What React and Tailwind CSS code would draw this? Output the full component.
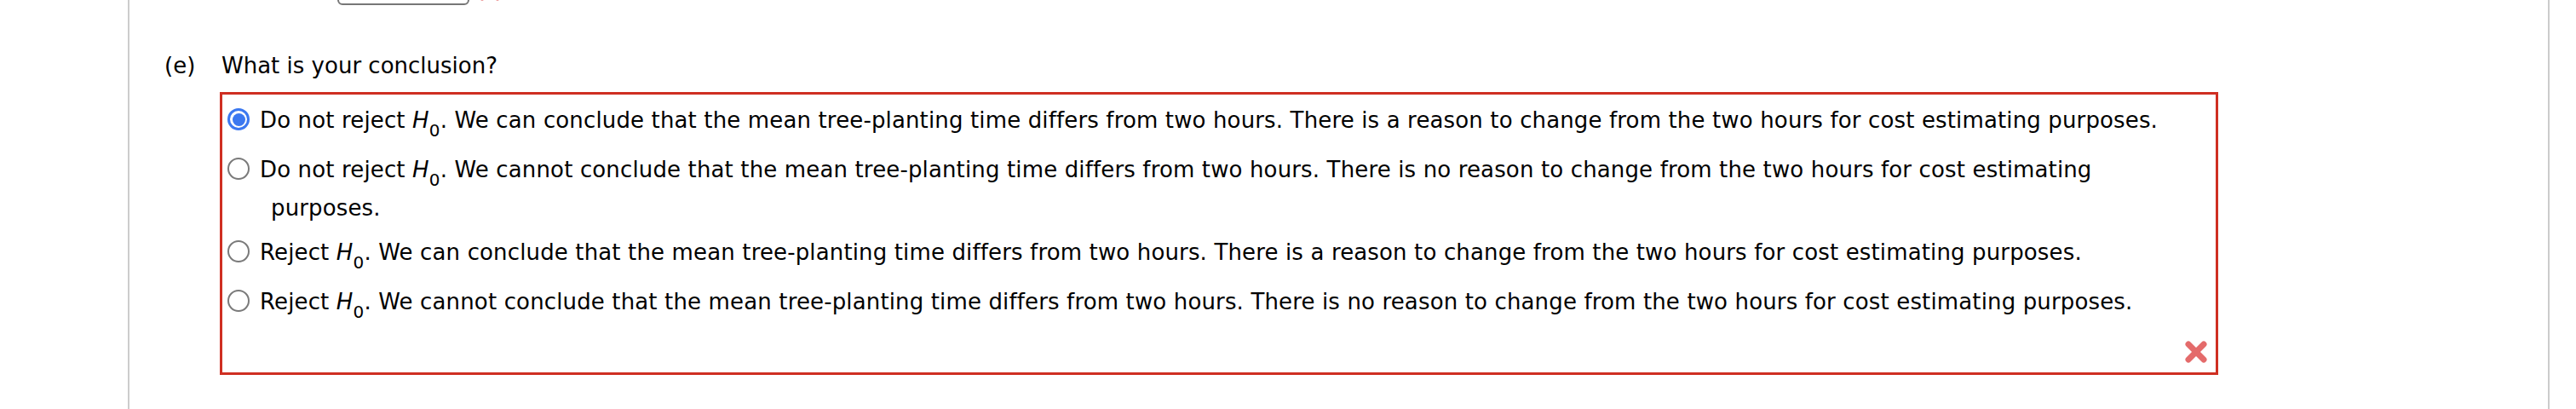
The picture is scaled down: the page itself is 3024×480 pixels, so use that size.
import React from "react";

const options = [
  {
    checked: true,
    lead: "Do not reject",
    rest: ". We can conclude that the mean tree-planting time differs from two hours. There is a reason to change from the two hours for cost estimating purposes.",
  },
  {
    checked: false,
    lead: "Do not reject",
    rest: ". We cannot conclude that the mean tree-planting time differs from two hours. There is no reason to change from the two hours for cost estimating",
    more: "purposes.",
  },
  {
    checked: false,
    lead: "Reject",
    rest: ". We can conclude that the mean tree-planting time differs from two hours. There is a reason to change from the two hours for cost estimating purposes.",
  },
  {
    checked: false,
    lead: "Reject",
    rest: ". We cannot conclude that the mean tree-planting time differs from two hours. There is no reason to change from the two hours for cost estimating purposes.",
  },
];

const WrongMark = ({ className }) => (
  <svg viewBox="0 0 28 28" className={className}>
    <g stroke="#e25b5b" strokeWidth="7" strokeLinecap="round" opacity="0.9">
      <line x1="5" y1="5" x2="23" y2="23" />
      <line x1="23" y1="5" x2="5" y2="23" />
    </g>
  </svg>
);

const Radio = ({ checked }) =>
  checked ? (
    <div className="w-[26px] h-[26px] shrink-0 mt-[5px] rounded-full border-[3px] border-[#3b78f0] bg-white flex items-center justify-center">
      <div className="w-[15px] h-[15px] rounded-full bg-[#3b78f0]" />
    </div>
  ) : (
    <div className="w-[26px] h-[26px] shrink-0 mt-[5px] rounded-full border-2 border-[#7a7a7a] bg-white" />
  );

const Option = ({ checked, lead, rest, more }) => (
  <div className="flex items-start">
    <Radio checked={checked} />
    <div className="ml-[12px] flex flex-col tracking-[0.14px] whitespace-nowrap">
      <div className="leading-[39px] pb-[6px]">
        {lead} <i>H</i>
        <span className="text-[20px] leading-none relative top-[10px]">0</span>
        {rest}
      </div>
      {more && <div className="leading-[39px] pl-[13px]">{more}</div>}
    </div>
  </div>
);

export default function App() {
  return (
    <div className="w-[3024px] h-[480px] bg-white overflow-hidden flex font-['DejaVu_Sans',sans-serif] text-[26px] text-black">
      <div className="w-[150px] shrink-0" />
      <div className="w-[2843px] shrink-0 border-l-2 border-r-2 border-[#cccccc] flex flex-col">
        <div className="h-[6px] flex items-end pl-[244px]">
          <div className="w-[155px] h-[40px] shrink-0 border-2 border-[#777] rounded-[6px]" />
          <WrongMark className="w-[28px] h-[28px] ml-[10px] mb-[4px] shrink-0" />
        </div>
        <div className="flex pl-[41px] mt-[52px]">
          <div className="w-[67px] shrink-0 leading-[39px]">(e)</div>
          <div className="flex flex-col">
            <div className="leading-[39px]">What is your conclusion?</div>
            <div className="mt-[11px] -ml-[2px] w-[2346px] border-[3px] border-[#cf2f22] pl-[6px] pt-[11px] pr-[9px] pb-[10px] flex flex-col">
              <div className="flex flex-col gap-[13px]">
                {options.map((o, i) => (
                  <Option key={i} {...o} />
                ))}
              </div>
              <div className="flex justify-end mt-[19px]">
                <WrongMark className="w-[28px] h-[28px]" />
              </div>
            </div>
          </div>
        </div>
      </div>
    </div>
  );
}
